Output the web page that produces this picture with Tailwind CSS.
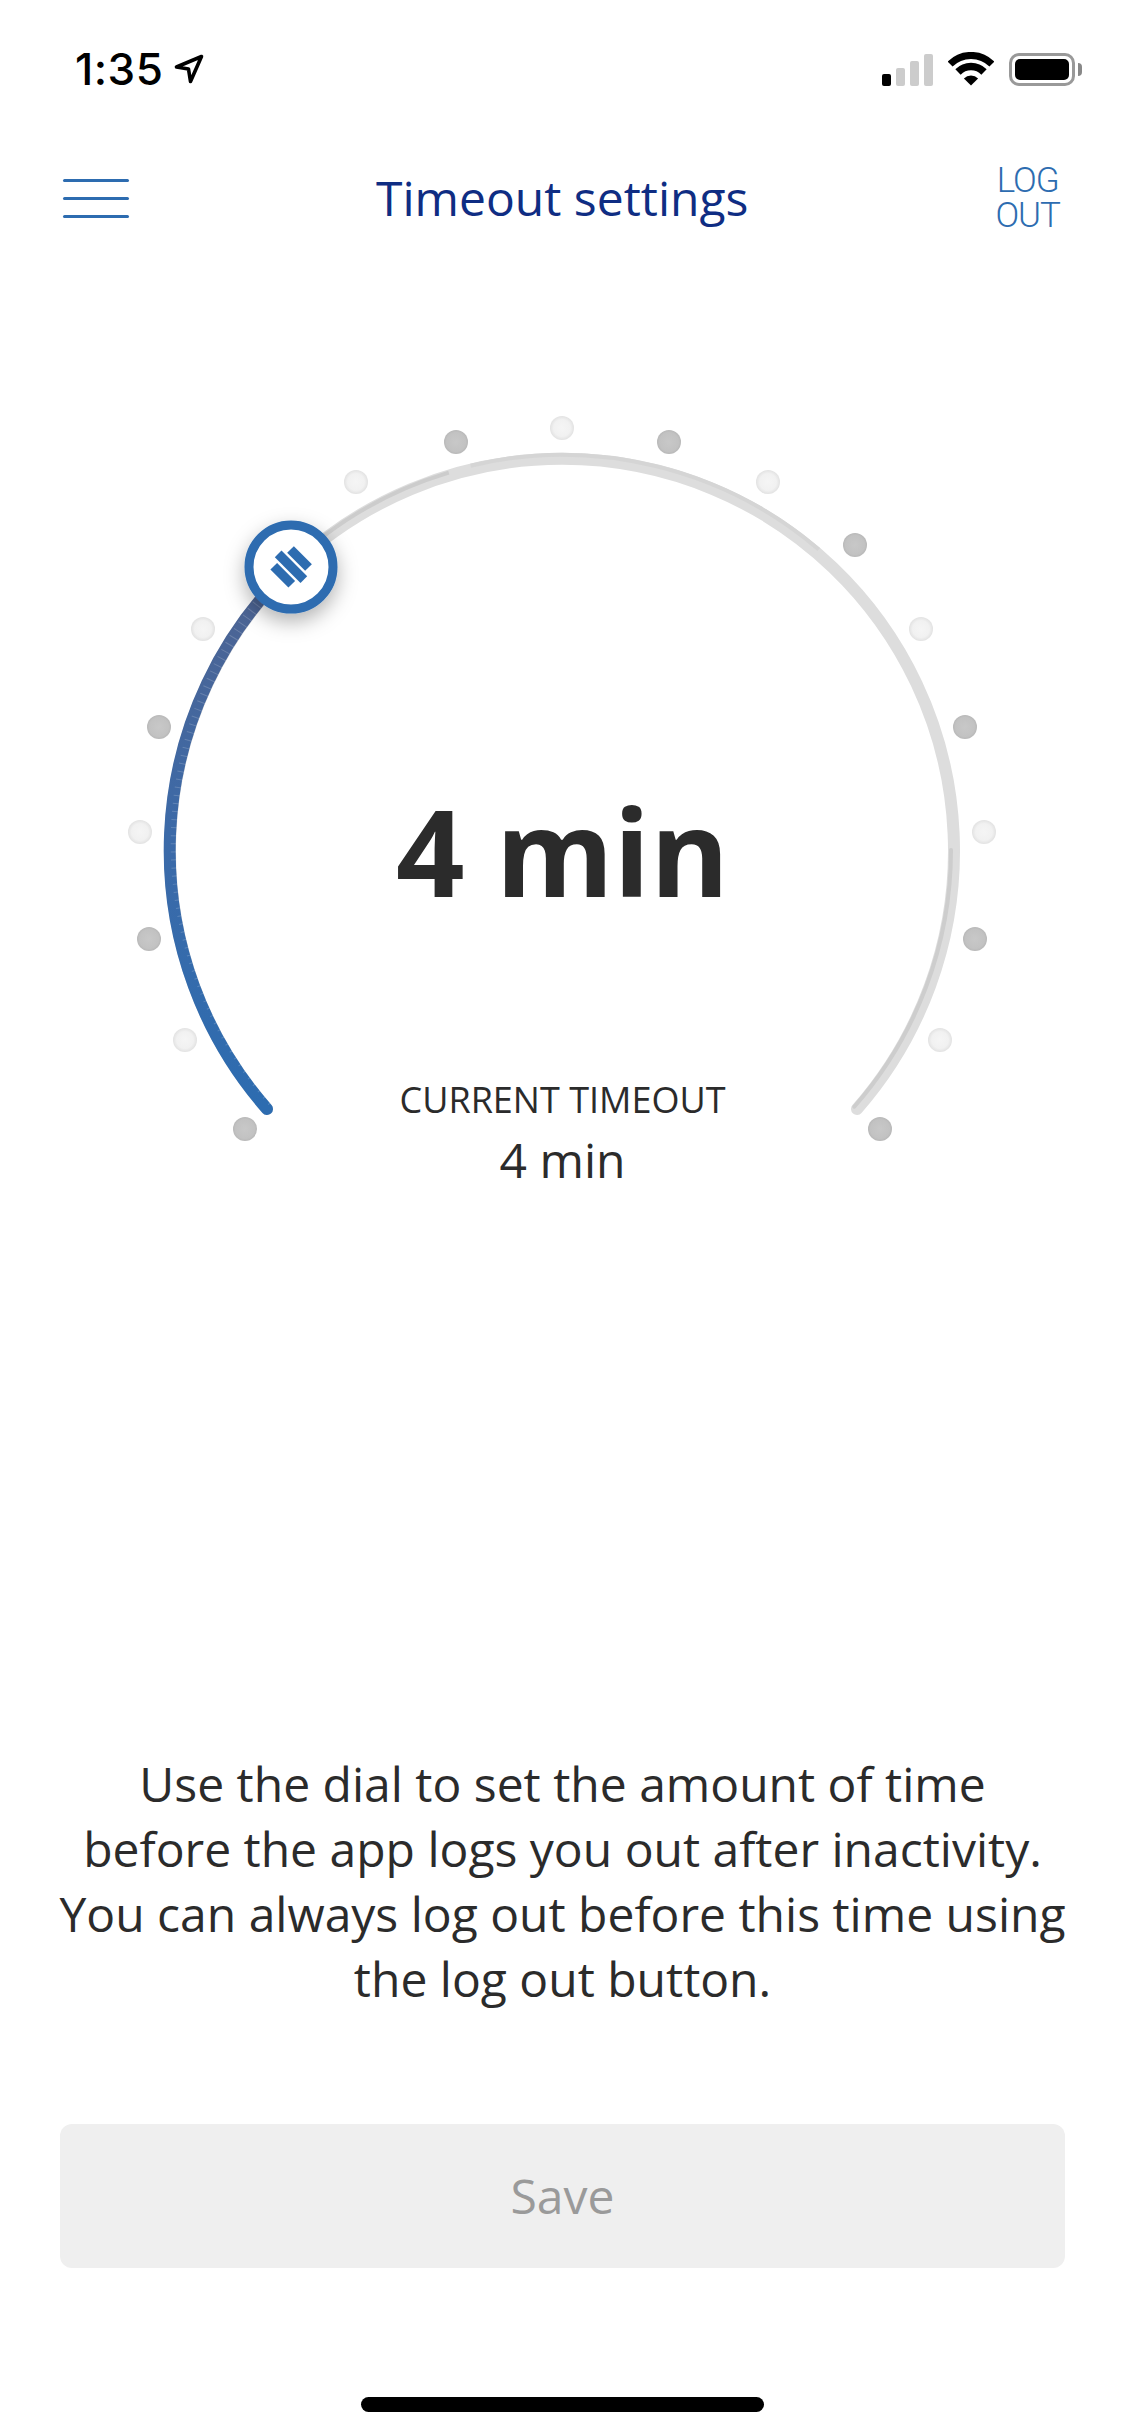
<!DOCTYPE html>
<html lang="en">
<head>
    <meta charset="UTF-8">
    <meta name="viewport" content="width=device-width, initial-scale=1.0">
    <title>Timeout settings</title>
    <script src="https://cdn.jsdelivr.net/npm/@tailwindcss/browser@4"></script>
</head>
<body class="bg-white font-['Open_Sans',sans-serif] text-[#2b2b2b]">
    <div class="w-[1125px] h-[2436px] overflow-hidden">

        <!-- Status bar -->
        <div class="h-[138px] pt-[44px]">
            <div class="h-[50px] flex items-center justify-between pl-[75px] pr-[43px]">
                <div class="flex items-center gap-[11px]">
                    <span class="font-['Inter',sans-serif] font-medium text-[44px] tracking-[0.5px] leading-none text-black">1:35</span>
                    <svg width="30" height="30" viewBox="0 0 30 30" fill="none">
                        <path d="M27.5 2.5 L2.5 13 L14.5 15 L16.5 27.5 Z" stroke="#000" stroke-width="3.6" stroke-linejoin="round"/>
                    </svg>
                </div>
                <div class="flex items-center">
                    <div class="flex items-end gap-[5px] h-[33px]">
                        <div class="w-[9px] h-[12px] rounded-[2px] bg-black"></div>
                        <div class="w-[9px] h-[18px] rounded-[2px] bg-[#cccccc]"></div>
                        <div class="w-[9px] h-[25px] rounded-[2px] bg-[#cccccc]"></div>
                        <div class="w-[9px] h-[32px] rounded-[2px] bg-[#cccccc]"></div>
                    </div>
                    <svg class="ml-[15px]" width="46" height="34" viewBox="0 0 46 34" fill="none">
                        <path d="M2.1 12.1 A29.5 29.5 0 0 1 43.9 12.1" stroke="#000" stroke-width="7"/>
                        <path d="M10 20 A18.3 18.3 0 0 1 36 20" stroke="#000" stroke-width="7.5"/>
                        <path d="M23 33.5 L15.9 26.4 A10 10 0 0 1 30.1 26.4 Z" fill="#000"/>
                    </svg>
                    <div class="ml-[15px] w-[66px] h-[33px] rounded-[10px] border-[3px] border-[#999999] p-[3px]">
                        <div class="w-full h-full rounded-[5px] bg-black"></div>
                    </div>
                    <div class="ml-[3px] w-[4px] h-[13px] rounded-r-full bg-[#888888]"></div>
                </div>
            </div>
        </div>

        <!-- Header -->
        <div class="h-[120px] flex items-center justify-between pl-[63px] pr-[65px]">
            <div class="w-[66px] flex flex-col gap-[15px]">
                <div class="h-[3px] rounded-full bg-[#2d6cb0]"></div>
                <div class="h-[3px] rounded-full bg-[#2d6cb0]"></div>
                <div class="h-[3px] rounded-full bg-[#2d6cb0]"></div>
            </div>
            <h1 class="text-[48px] leading-none text-[#0f2d83]">Timeout settings</h1>
            <div class="font-['Roboto',sans-serif] font-light text-[35px] tracking-[-1px] leading-[35px] text-[#2d6cb0] text-center">LOG<br>OUT</div>
        </div>

        <!-- Dial -->
        <div class="relative mt-[142px] h-[800px] flex flex-col items-center pt-[391px]">
            <svg class="absolute inset-0" width="1125" height="800" viewBox="0 400 1125 800" fill="none">
                <defs>
                    <radialGradient id="dotDark">
                        <stop offset="0" stop-color="#c8c8c8"/>
                        <stop offset="0.8" stop-color="#c2c2c2"/>
                        <stop offset="1" stop-color="#b8b8b8"/>
                    </radialGradient>
                    <radialGradient id="dotLight">
                        <stop offset="0" stop-color="#f5f5f5"/>
                        <stop offset="0.7" stop-color="#f1f1f1"/>
                        <stop offset="1" stop-color="#e2e2e2"/>
                    </radialGradient>
                    <linearGradient id="blueArc" gradientUnits="userSpaceOnUse" x1="267" y1="1109" x2="291" y2="567">
                        <stop offset="0" stop-color="#2d6cb0"/>
                        <stop offset="0.5" stop-color="#3c6aa8"/>
                        <stop offset="1" stop-color="#4f6390"/>
                    </linearGradient>
                    <filter id="handleShadow" x="-50%" y="-50%" width="200%" height="200%">
                        <feDropShadow dx="0" dy="8" stdDeviation="10" flood-color="#000" flood-opacity="0.3"/>
                    </filter>
                </defs>

                <!-- light ticks -->
                <g fill="url(#dotLight)">
                    <circle cx="562" cy="428" r="12"/>
                    <circle cx="356" cy="482" r="12"/>
                    <circle cx="768" cy="482" r="12"/>
                    <circle cx="203" cy="629" r="12"/>
                    <circle cx="921" cy="629" r="12"/>
                    <circle cx="140" cy="832" r="12"/>
                    <circle cx="984" cy="832" r="12"/>
                    <circle cx="185" cy="1040" r="12"/>
                    <circle cx="940" cy="1040" r="12"/>
                </g>
                <!-- dark ticks -->
                <g fill="url(#dotDark)">
                    <circle cx="456" cy="442" r="12"/>
                    <circle cx="669" cy="442" r="12"/>
                    <circle cx="855" cy="545" r="12"/>
                    <circle cx="159" cy="727" r="12"/>
                    <circle cx="965" cy="727" r="12"/>
                    <circle cx="149" cy="939" r="12"/>
                    <circle cx="975" cy="939" r="12"/>
                    <circle cx="245" cy="1129" r="12"/>
                    <circle cx="880" cy="1129" r="12"/>
                </g>

                <!-- grey track -->
                <path d="M267 1109 A392 392 0 1 1 857 1109" stroke="#dddddd" stroke-width="12" stroke-linecap="round"/>
                <path d="M324.2 535.6 A394 394 0 0 1 448.8 472.6" stroke="#cccccc" stroke-width="4"/>
                <path d="M470.6 465.7 A395 395 0 0 1 818.7 549.5" stroke="#d5d5d5" stroke-width="4"/>
                <path d="M951 850 A389 389 0 0 1 854.3 1106.7" stroke="#cdcdcd" stroke-width="4" stroke-linecap="round"/>

                <!-- blue progress -->
                <path d="M267 1109 A392 392 0 0 1 291 567" stroke="url(#blueArc)" stroke-width="12" stroke-linecap="round"/>
                <path d="M273 1101 A392 392 0 0 1 291 567" stroke="#ffffff" stroke-opacity="0.18" stroke-width="12" stroke-dasharray="1 7"/>

                <!-- handle -->
                <circle cx="291" cy="567" r="42" fill="#ffffff" stroke="#2d6cb0" stroke-width="9" filter="url(#handleShadow)"/>
                <g fill="#2d6cb0">
                    <polygon points="293.85,546.15 311.85,564.15 305.15,570.85 287.15,552.85"/>
                    <polygon points="281.5,550.5 307.2,576.2 300.5,582.9 274.8,557.2"/>
                    <polygon points="277.1,562.9 295.1,580.9 288.4,587.6 270.4,569.6"/>
                </g>
            </svg>

            <div class="relative font-bold text-[120px] leading-none">4 min</div>
            <div class="relative mt-[171px] text-[36px] leading-none">CURRENT TIMEOUT</div>
            <div class="relative mt-[18px] text-[48px] leading-none">4 min</div>
        </div>

        <!-- Description -->
        <p class="mt-[551px] text-[48px] leading-[65px] text-center">
            Use the dial to set the amount of time<br>
            before the app logs you out after inactivity.<br>
            You can always log out before this time using<br>
            the log out button.
        </p>

        <!-- Save -->
        <div class="mt-[113px] mx-[60px] h-[144px] rounded-[12px] bg-[#efefef] flex items-center justify-center text-[48px] text-[#9a9a9a]">Save</div>

        <!-- Home indicator -->
        <div class="mt-[129px] mx-auto w-[403px] h-[15px] rounded-full bg-black"></div>
    </div>
</body>
</html>
